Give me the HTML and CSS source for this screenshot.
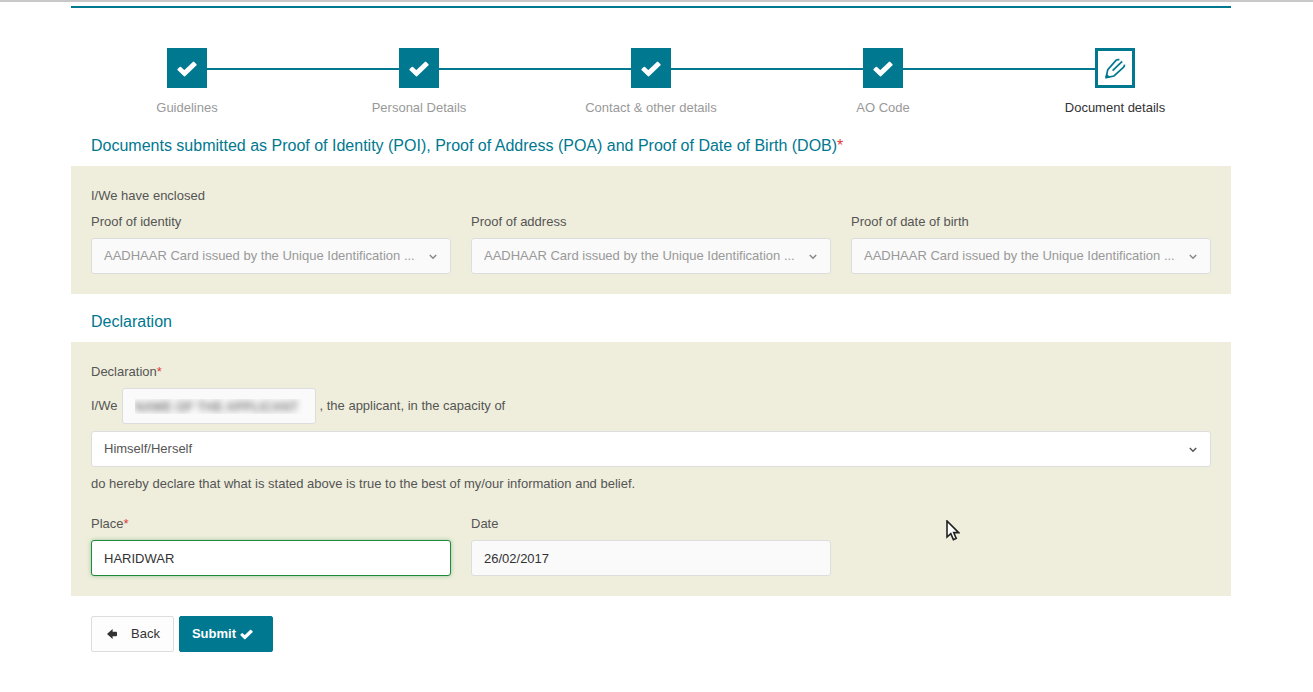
FILE: index.html
```html
<!DOCTYPE html>
<html lang="en">
<head>
    <meta charset="UTF-8">
    <meta name="viewport" content="width=device-width, initial-scale=1.0">
    <title>Document details</title>
    <link rel="stylesheet" href="styles.css">
</head>
<body>
    <svg class="sprite" aria-hidden="true">
        <symbol id="check" viewBox="0 0 20 16">
            <path d="M1.4 8.6 L3.4 6.8 L7.3 10.4 L16.5 1.6 L18.6 3.8 L7.4 14.4 Z" fill="currentColor" stroke="currentColor" stroke-width="2" stroke-linejoin="round"/>
        </symbol>
        <symbol id="chevron" viewBox="0 0 8 6">
            <path d="M0.8 1 L4 4.2 L7.2 1" fill="none" stroke="currentColor" stroke-width="1.5"/>
        </symbol>
    </svg>
    <div class="container">
        <ol class="steps">
            <li class="step done">
                <span class="step-box"><svg><use href="#check"/></svg></span>
                <span class="step-label">Guidelines</span>
            </li>
            <li class="step done">
                <span class="step-box"><svg><use href="#check"/></svg></span>
                <span class="step-label">Personal Details</span>
            </li>
            <li class="step done">
                <span class="step-box"><svg><use href="#check"/></svg></span>
                <span class="step-label">Contact &amp; other details</span>
            </li>
            <li class="step done">
                <span class="step-box"><svg><use href="#check"/></svg></span>
                <span class="step-label">AO Code</span>
            </li>
            <li class="step current">
                <span class="step-box">
                    <svg viewBox="0 0 22 22" fill="none" stroke="currentColor">
                        <path d="M2 19.6 L3.8 11.6 L12.2 2.2 Q13 1.4 15.4 1.6" stroke-width="1.7"/>
                        <path d="M2 19.6 L10 18 L19.4 9.4 Q20.6 8.2 20.4 6.6" stroke-width="1.7"/>
                        <path d="M8.6 12.6 L18.2 3.4" stroke-width="1.7"/>
                        <path d="M1 20.6 L2.4 15.4 L6.4 19.2 Z" fill="currentColor" stroke="none"/>
                    </svg>
                </span>
                <span class="step-label">Document details</span>
            </li>
        </ol>

        <form>
            <h2>Documents submitted as Proof of Identity (POI), Proof of Address (POA) and Proof of Date of Birth (DOB)<span class="req">*</span></h2>
            <section class="panel">
                <p class="intro">I/We have enclosed</p>
                <div class="row">
                    <div class="field">
                        <label for="poi">Proof of identity</label>
                        <div class="select">
                            <select id="poi" disabled><option>AADHAAR Card issued by the Unique Identification ...</option></select>
                            <svg><use href="#chevron"/></svg>
                        </div>
                    </div>
                    <div class="field">
                        <label for="poa">Proof of address</label>
                        <div class="select">
                            <select id="poa" disabled><option>AADHAAR Card issued by the Unique Identification ...</option></select>
                            <svg><use href="#chevron"/></svg>
                        </div>
                    </div>
                    <div class="field">
                        <label for="dob">Proof of date of birth</label>
                        <div class="select">
                            <select id="dob" disabled><option>AADHAAR Card issued by the Unique Identification ...</option></select>
                            <svg><use href="#chevron"/></svg>
                        </div>
                    </div>
                </div>
            </section>

            <h2>Declaration</h2>
            <section class="panel">
                <p class="legend">Declaration<span class="req">*</span></p>
                <div class="inline">
                    <label for="applicant">I/We</label>
                    <input id="applicant" class="masked" type="text" value="NAME OF THE APPLICANT" readonly>
                    <label for="capacity">, the applicant, in the capacity of</label>
                </div>
                <div class="select">
                    <select id="capacity"><option>Himself/Herself</option></select>
                    <svg><use href="#chevron"/></svg>
                </div>
                <p class="statement">do hereby declare that what is stated above is true to the best of my/our information and belief.</p>
                <div class="row">
                    <div class="field">
                        <label for="place">Place<span class="req">*</span></label>
                        <input id="place" class="valid" type="text" value="HARIDWAR">
                    </div>
                    <div class="field">
                        <label for="date">Date</label>
                        <input id="date" type="text" value="26/02/2017" readonly>
                    </div>
                </div>
                <svg class="cursor" viewBox="0 0 14 21" aria-hidden="true">
                    <path d="M1 1 V17 L4.8 13.6 L7.4 19.6 L10.2 18.4 L7.7 12.6 H12.6 Z" fill="#fff" stroke="#222" stroke-width="1.6"/>
                </svg>
            </section>

            <div class="actions">
                <button type="button" class="btn">
                    <svg viewBox="0 0 10 10"><path d="M0 5 L5.6 0 V2.8 H9 Q10 2.8 10 3.8 V6.2 Q10 7.2 9 7.2 H5.6 V10 Z" fill="currentColor"/></svg>
                    Back
                </button>
                <button type="submit" class="btn primary">Submit <svg><use href="#check"/></svg></button>
            </div>
        </form>
    </div>
</body>
</html>
```
FILE: styles.css
```css
* {
    box-sizing: border-box;
}
body {
    margin: 0;
    padding: 4px 11px 20px 0;
    border-top: 2px solid #c8c8c8;
    background: #fff;
    color: #555;
    font-family: Arial, "Liberation Sans", sans-serif;
    font-size: 13px;
    line-height: 20px;
}
.sprite {
    position: absolute;
    width: 0;
    height: 0;
}
.container {
    max-width: 1160px;
    margin: 0 auto;
    border-top: 2px solid #007890;
}

/* progress steps */
.steps {
    display: flex;
    margin: 0;
    padding: 40px 0 0;
    list-style: none;
}
.step {
    flex: 1;
    position: relative;
    display: flex;
    flex-direction: column;
    align-items: center;
    gap: 10px;
    color: #999;
}
.step + .step::before {
    content: "";
    position: absolute;
    top: 20px;
    left: -50%;
    width: 100%;
    height: 2px;
    background: #007890;
}
.step-box {
    position: relative;
    z-index: 1;
    display: flex;
    align-items: center;
    justify-content: center;
    width: 40px;
    height: 40px;
    border: 3px solid #007890;
    background: #007890;
    color: #fff;
}
.step-box svg {
    width: 20px;
    height: 16px;
    margin-top: 2px;
}
.current {
    color: #333;
}
.current .step-box {
    background: #fff;
    color: #007890;
}
.current .step-box svg {
    width: 22px;
    height: 22px;
}

h2 {
    margin: 0;
    padding: 18px 20px 10px;
    color: #007890;
    font-size: 16px;
    font-weight: normal;
    line-height: 20px;
}
.req {
    color: #e03c3c;
}
.panel {
    position: relative;
    padding: 20px;
    background: #efeedc;
}
p {
    margin: 0;
}
.intro {
    margin-bottom: 6px;
}
.row {
    display: grid;
    grid-template-columns: repeat(3, 1fr);
    gap: 20px;
}
.field label {
    display: block;
    margin-bottom: 6px;
}
input,
select {
    display: block;
    width: 100%;
    height: 36px;
    padding: 0 12px;
    border: 1px solid #ddd;
    border-radius: 3px;
    background: #fff;
    color: #333;
    font: inherit;
}
input[readonly],
select:disabled {
    background: #fafafa;
}
select {
    appearance: none;
    color: #555;
}
select:disabled {
    color: #999;
    opacity: 1;
}
.select {
    position: relative;
    color: #555;
}
.select svg {
    position: absolute;
    top: 16px;
    right: 14px;
    width: 8px;
    height: 6px;
    pointer-events: none;
}
select:disabled + svg {
    color: #888;
}
.legend {
    margin-bottom: 6px;
}
.inline {
    display: flex;
    align-items: center;
    gap: 4px;
    margin-bottom: 7px;
}
input.masked {
    width: 194px;
    color: transparent;
    text-shadow: 0 0 6px #444;
}
.statement {
    padding: 7px 0 20px;
}
input.valid {
    border-color: #1f8a3b;
    box-shadow: 0 0 4px rgba(31, 138, 59, 0.4);
    outline: none;
}
.cursor {
    position: absolute;
    top: 178px;
    left: 75.4%;
    width: 14px;
    height: 21px;
}

.actions {
    display: flex;
    gap: 5px;
    padding: 20px;
}
.btn {
    display: flex;
    align-items: center;
    gap: 14px;
    height: 36px;
    padding: 0 13px 0 15px;
    border: 1px solid #ddd;
    border-radius: 2px;
    background: #fdfdfd;
    color: #333;
    font: inherit;
    cursor: pointer;
}
.btn svg {
    width: 10px;
    height: 10px;
}
.btn.primary {
    gap: 4px;
    padding: 0 19px 0 12px;
    border-color: #007890;
    background: #007890;
    color: #fff;
    font-weight: bold;
}
.btn.primary svg {
    width: 13px;
    height: 11px;
}
```
